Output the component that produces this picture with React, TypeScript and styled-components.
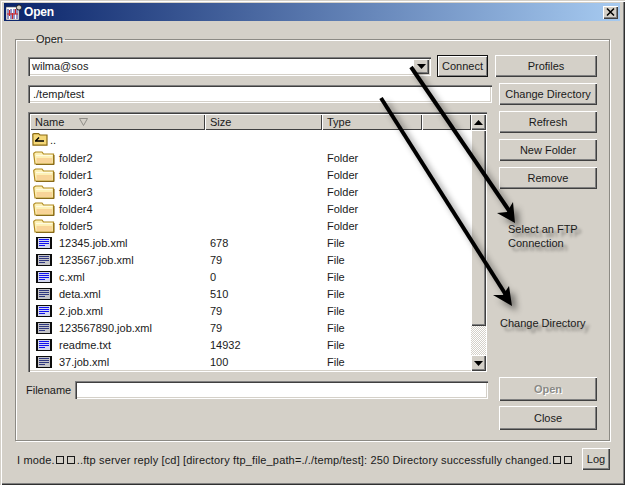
import React from 'react';
import styled, { createGlobalStyle, css } from 'styled-components';

const face = '#d4d0c8';

const GlobalStyle = createGlobalStyle`
  html, body { margin: 0; padding: 0; background: ${face}; }
  * { box-sizing: border-box; }
`;

const raised = css`
  background: ${face};
  box-shadow: inset 1px 1px #fff, inset -1px -1px #404040, inset -2px -2px #808080;
`;

const sunken = css`
  background: #fff;
  box-shadow: inset 1px 1px #808080, inset 2px 2px #404040, inset -1px -1px #fff, inset -2px -2px ${face};
`;

const Window = styled.div`
  position: relative;
  width: 625px;
  height: 485px;
  padding: 3px 5px 0 4px;
  overflow: hidden;
  background: ${face};
  color: #1a1a1a;
  font: 11px/14px "Liberation Sans", sans-serif;
  box-shadow: inset 1px 1px ${face}, inset 2px 2px #fff, inset -1px -1px #303030, inset -2px -2px #808080;
`;

const TitleBar = styled.div`
  display: flex;
  align-items: center;
  height: 18px;
  padding: 0 2px 0 2px;
  background: linear-gradient(90deg, #0a246a, #a6caf0);
`;

const TitleText = styled.span`
  flex: 1;
  margin-left: 1px;
  color: #fff;
  letter-spacing: -0.2px;
  font: bold 12px/18px "Liberation Sans", sans-serif;
`;

const CloseButton = styled.div`
  ${raised}
  display: flex;
  align-items: center;
  justify-content: center;
  width: 15px;
  height: 13px;
`;

const GroupBox = styled.fieldset`
  width: 595px;
  height: 409px;
  margin: 11px 0 0 11px;
  padding: 9px 12px 0 12px;
  border: 1px solid #8c8a84;
  box-shadow: 1px 1px #fff, inset 1px 1px #fff;
`;

const GroupLegend = styled.legend`
  margin-left: 6px;
  padding: 0 2px;
  line-height: 14px;
`;

const Columns = styled.div`
  display: flex;
  gap: 3px;
  height: 375px;
`;

const LeftColumn = styled.div`
  display: flex;
  flex-direction: column;
  width: 464px;
`;

const RightColumn = styled.div`
  display: flex;
  flex-direction: column;
  align-items: flex-end;
  gap: 6px;
  width: 102px;
`;

const ConnectionRow = styled.div`
  display: flex;
  align-items: center;
  gap: 6px;
  height: 22px;
`;

const ComboBox = styled.div`
  ${sunken}
  display: flex;
  align-items: center;
  justify-content: space-between;
  width: 403px;
  height: 19px;
  padding: 0 2px 0 4px;
`;

const ComboArrow = styled.div`
  ${raised}
  display: flex;
  align-items: center;
  justify-content: center;
  width: 16px;
  height: 15px;
`;

const PathField = styled.div`
  ${sunken}
  height: 18px;
  margin-top: 8px;
  padding: 2px 5px;
`;

const FileTable = styled.div`
  ${sunken}
  display: flex;
  width: 459px;
  height: 260px;
  margin-top: 9px;
  padding: 2px 1px 1px 2px;
`;

const TableMain = styled.div`
  flex: 1;
  overflow: hidden;
`;

const HeaderRow = styled.div`
  display: grid;
  grid-template-columns: 175px 117px 100px 1fr;
  height: 16px;
`;

const HeaderCell = styled.div`
  ${raised}
  display: flex;
  align-items: center;
  gap: 15px;
  padding-left: 5px;
  box-shadow: inset 1px 1px #fff, inset -1px -1px #404040;
`;

const FileList = styled.div`
  padding-top: 1px;
`;

const FileRow = styled.div<{ $tall?: boolean }>`
  display: grid;
  grid-template-columns: 175px 117px 100px;
  align-items: center;
  height: ${(p) => (p.$tall ? 18 : 17)}px;
`;

const NameCell = styled.div<{ $kind: string }>`
  display: flex;
  align-items: center;
  gap: ${(p) => (p.$kind === 'up' ? 2 : p.$kind === 'doc' ? 7 : 4)}px;
  padding-left: ${(p) => (p.$kind === 'doc' ? 6 : p.$kind === 'up' ? 2 : 3)}px;
`;

const ValueCell = styled.div`
  padding-left: 5px;
`;

const ScrollBar = styled.div`
  display: flex;
  flex-direction: column;
  width: 15px;
`;

const ScrollButton = styled.div`
  ${raised}
  display: flex;
  align-items: center;
  justify-content: center;
  flex: none;
  height: 16px;
`;

const ScrollThumb = styled.div`
  ${raised}
  flex: none;
  height: 196px;
`;

const ScrollTrack = styled.div`
  flex: 1;
  background: repeating-conic-gradient(#fff 0 25%, ${face} 0 50%) 0 0 / 2px 2px;
`;

const FilenameRow = styled.div`
  display: flex;
  align-items: center;
  justify-content: space-between;
  width: 462px;
  height: 18px;
  margin-top: 9px;
  margin-left: -2px;
`;

const FilenameInput = styled.div`
  ${sunken}
  width: 413px;
  height: 18px;
`;

const Button = styled.div<{ $wide?: boolean; $disabled?: boolean; $tall?: boolean }>`
  ${raised}
  display: flex;
  align-items: center;
  justify-content: center;
  flex: none;
  width: ${(p) => (p.$wide ? 102 : 98)}px;
  height: ${(p) => (p.$tall ? 24 : 22)}px;
  ${(p) => p.$disabled && css`
    color: #8a8a86;
    font-weight: bold;
    text-shadow: 1px 1px #fff;
  `}
`;

const ConnectButton = styled(Button)`
  width: 51px;
  box-shadow: inset 0 0 0 1px #111, inset 2px 2px #fff, inset -2px -2px #808080;
`;

const Note = styled.div<{ $left: number; $top: number }>`
  align-self: stretch;
  margin: ${(p) => p.$top}px 0 0 ${(p) => p.$left}px;
  text-shadow: 4px 4px 3px rgba(0, 0, 0, 0.4);
`;

const BottomButtons = styled.div`
  display: flex;
  flex-direction: column;
  gap: 5px;
  margin-top: auto;
`;

const StatusRow = styled.div`
  display: flex;
  align-items: center;
  justify-content: space-between;
  height: 22px;
  margin: 7px 0 0 13px;
  padding-right: 10px;
`;

const StatusText = styled.span`
  white-space: nowrap;
  letter-spacing: 0.15px;
  margin-top: 1px;
`;

const MissingGlyph = styled.span`
  display: inline-block;
  width: 8px;
  height: 8px;
  margin: 0 2px 0 1px;
  border: 1px solid #1a1a1a;
`;

const LogButton = styled(Button)`
  width: 28px;
`;

const ArrowLayer = styled.svg`
  position: absolute;
  top: 0;
  left: 0;
  pointer-events: none;
  filter: drop-shadow(5px 5px 3px rgba(0, 0, 0, 0.45));
`;

const AppIcon = () => (
  <svg width="17" height="16" viewBox="0 0 17 16">
    <rect x="0" y="3" width="13" height="13" fill="#fff" stroke="#555" strokeWidth="0.6" />
    <path d="M2 5v10M5 5v10M8 5v10M11 5v10" stroke="#2a2a8a" strokeWidth="1" />
    <path d="M1 10h11M3.5 6v6M6.5 9v6M9.5 5v5" stroke="#d02020" strokeWidth="1" />
    <circle cx="13" cy="3.5" r="2.6" fill="#d8d4c8" stroke="#222" strokeWidth="1" />
  </svg>
);

const CloseGlyph = () => (
  <svg width="9" height="8" viewBox="0 0 9 8">
    <path d="M1 0.5l7 7M8 0.5l-7 7" stroke="#000" strokeWidth="1.5" />
  </svg>
);

const Triangle = ({ up }: { up?: boolean }) => (
  <svg width="9" height="5" viewBox="0 0 9 5">
    <path d={up ? 'M4.5 0L9 5H0z' : 'M0 0h9L4.5 5z'} fill="#000" />
  </svg>
);

const SortMark = () => (
  <svg width="9" height="8" viewBox="0 0 9 8">
    <path d="M0.5 0.5h8L4.5 7.5z" fill="none" stroke="#8f8d87" />
  </svg>
);

const FolderIcon = () => (
  <svg width="22" height="14" viewBox="0 0 22 14">
    <path d="M0.8 3.5V2.2L2.5 1h6.5l1.5 2h10v10H2z" fill="#fdf0b4" stroke="#b08a20" strokeWidth="1.2" />
    <path d="M3.5 7h15.5v5H3.5z" fill="#f8d498" />
    <path d="M3 4.5h16.5" stroke="#fffbe0" strokeWidth="1.2" />
    <path d="M21 4v9.6H3" fill="none" stroke="#806010" strokeWidth="1" />
  </svg>
);

const UpFolderIcon = () => (
  <svg width="16" height="13" viewBox="0 0 16 13" style={{ marginTop: -2 }}>
    <path d="M0.8 2V1.2L2 0.6h4.5L8 2h7v10.2H1z" fill="#f5d878" stroke="#8a6a14" strokeWidth="1.2" />
    <path d="M3 8h9M7 4.5L3.5 8" fill="none" stroke="#000" strokeWidth="1.4" />
  </svg>
);

const DocIcon = ({ bright }: { bright: boolean }) => (
  <svg width="16" height="12" viewBox="0 0 16 12">
    <rect x="0" y="0" width="16" height="12" fill="#0c0c0c" />
    <rect x="2" y="1" width="12" height="10" fill={bright ? '#d4d8f0' : '#c4c4c8'} />
    <path d="M3 2.5h10M3 4.5h10M3 6.5h10M3 8.5h6" stroke={bright ? '#1010f0' : '#303880'} strokeWidth="1" />
  </svg>
);

type Entry = { name: string; size?: string; type?: string; kind: 'up' | 'folder' | 'doc'; bright?: boolean };

const entries: Entry[] = [
  { name: '..', kind: 'up' },
  { name: 'folder2', type: 'Folder', kind: 'folder' },
  { name: 'folder1', type: 'Folder', kind: 'folder' },
  { name: 'folder3', type: 'Folder', kind: 'folder' },
  { name: 'folder4', type: 'Folder', kind: 'folder' },
  { name: 'folder5', type: 'Folder', kind: 'folder' },
  { name: '12345.job.xml', size: '678', type: 'File', kind: 'doc', bright: true },
  { name: '123567.job.xml', size: '79', type: 'File', kind: 'doc' },
  { name: 'c.xml', size: '0', type: 'File', kind: 'doc', bright: true },
  { name: 'deta.xml', size: '510', type: 'File', kind: 'doc' },
  { name: '2.job.xml', size: '79', type: 'File', kind: 'doc', bright: true },
  { name: '123567890.job.xml', size: '79', type: 'File', kind: 'doc' },
  { name: 'readme.txt', size: '14932', type: 'File', kind: 'doc', bright: true },
  { name: '37.job.xml', size: '100', type: 'File', kind: 'doc' },
];

const App = () => (
  <Window>
    <GlobalStyle />
    <TitleBar>
      <AppIcon />
      <TitleText>Open</TitleText>
      <CloseButton><CloseGlyph /></CloseButton>
    </TitleBar>
    <GroupBox>
      <GroupLegend>Open</GroupLegend>
      <Columns>
        <LeftColumn>
          <ConnectionRow>
            <ComboBox>
              wilma@sos
              <ComboArrow><Triangle /></ComboArrow>
            </ComboBox>
            <ConnectButton>Connect</ConnectButton>
          </ConnectionRow>
          <PathField>./temp/test</PathField>
          <FileTable>
            <TableMain>
              <HeaderRow>
                <HeaderCell>Name <SortMark /></HeaderCell>
                <HeaderCell>Size</HeaderCell>
                <HeaderCell>Type</HeaderCell>
                <HeaderCell />
              </HeaderRow>
              <FileList>
                {entries.map((e) => (
                  <FileRow key={e.name} $tall={e.kind === 'up'}>
                    <NameCell $kind={e.kind}>
                      {e.kind === 'up' && <UpFolderIcon />}
                      {e.kind === 'folder' && <FolderIcon />}
                      {e.kind === 'doc' && <DocIcon bright={!!e.bright} />}
                      {e.name}
                    </NameCell>
                    <ValueCell>{e.size}</ValueCell>
                    <ValueCell>{e.type}</ValueCell>
                  </FileRow>
                ))}
              </FileList>
            </TableMain>
            <ScrollBar>
              <ScrollButton><Triangle up /></ScrollButton>
              <ScrollThumb />
              <ScrollTrack />
              <ScrollButton><Triangle /></ScrollButton>
            </ScrollBar>
          </FileTable>
          <FilenameRow>
            Filename
            <FilenameInput />
          </FilenameRow>
        </LeftColumn>
        <RightColumn>
          <Button $wide>Profiles</Button>
          <Button>Change Directory</Button>
          <Button>Refresh</Button>
          <Button>New Folder</Button>
          <Button>Remove</Button>
          <Note $left={13} $top={27}>Select an FTP<br />Connection</Note>
          <Note $left={5} $top={60}>Change Directory</Note>
          <BottomButtons>
            <Button $disabled $tall>Open</Button>
            <Button $tall>Close</Button>
          </BottomButtons>
        </RightColumn>
      </Columns>
    </GroupBox>
    <StatusRow>
      <StatusText>
        I mode.<MissingGlyph /><MissingGlyph />..ftp server reply [cd] [directory ftp_file_path=././temp/test]: 250 Directory successfully changed.<MissingGlyph /><MissingGlyph />
      </StatusText>
      <LogButton>Log</LogButton>
    </StatusRow>
    <ArrowLayer width="625" height="485" viewBox="0 0 625 485">
      <path d="M411 67L510 212" stroke="#000" strokeWidth="4" fill="none" />
      <path d="M515 223L497 213L507 212L513 202z" fill="#000" />
      <path d="M381 98L506 295" stroke="#000" strokeWidth="4" fill="none" />
      <path d="M512 306L493 295L503 295L509 286z" fill="#000" />
    </ArrowLayer>
  </Window>
);

export default App;
